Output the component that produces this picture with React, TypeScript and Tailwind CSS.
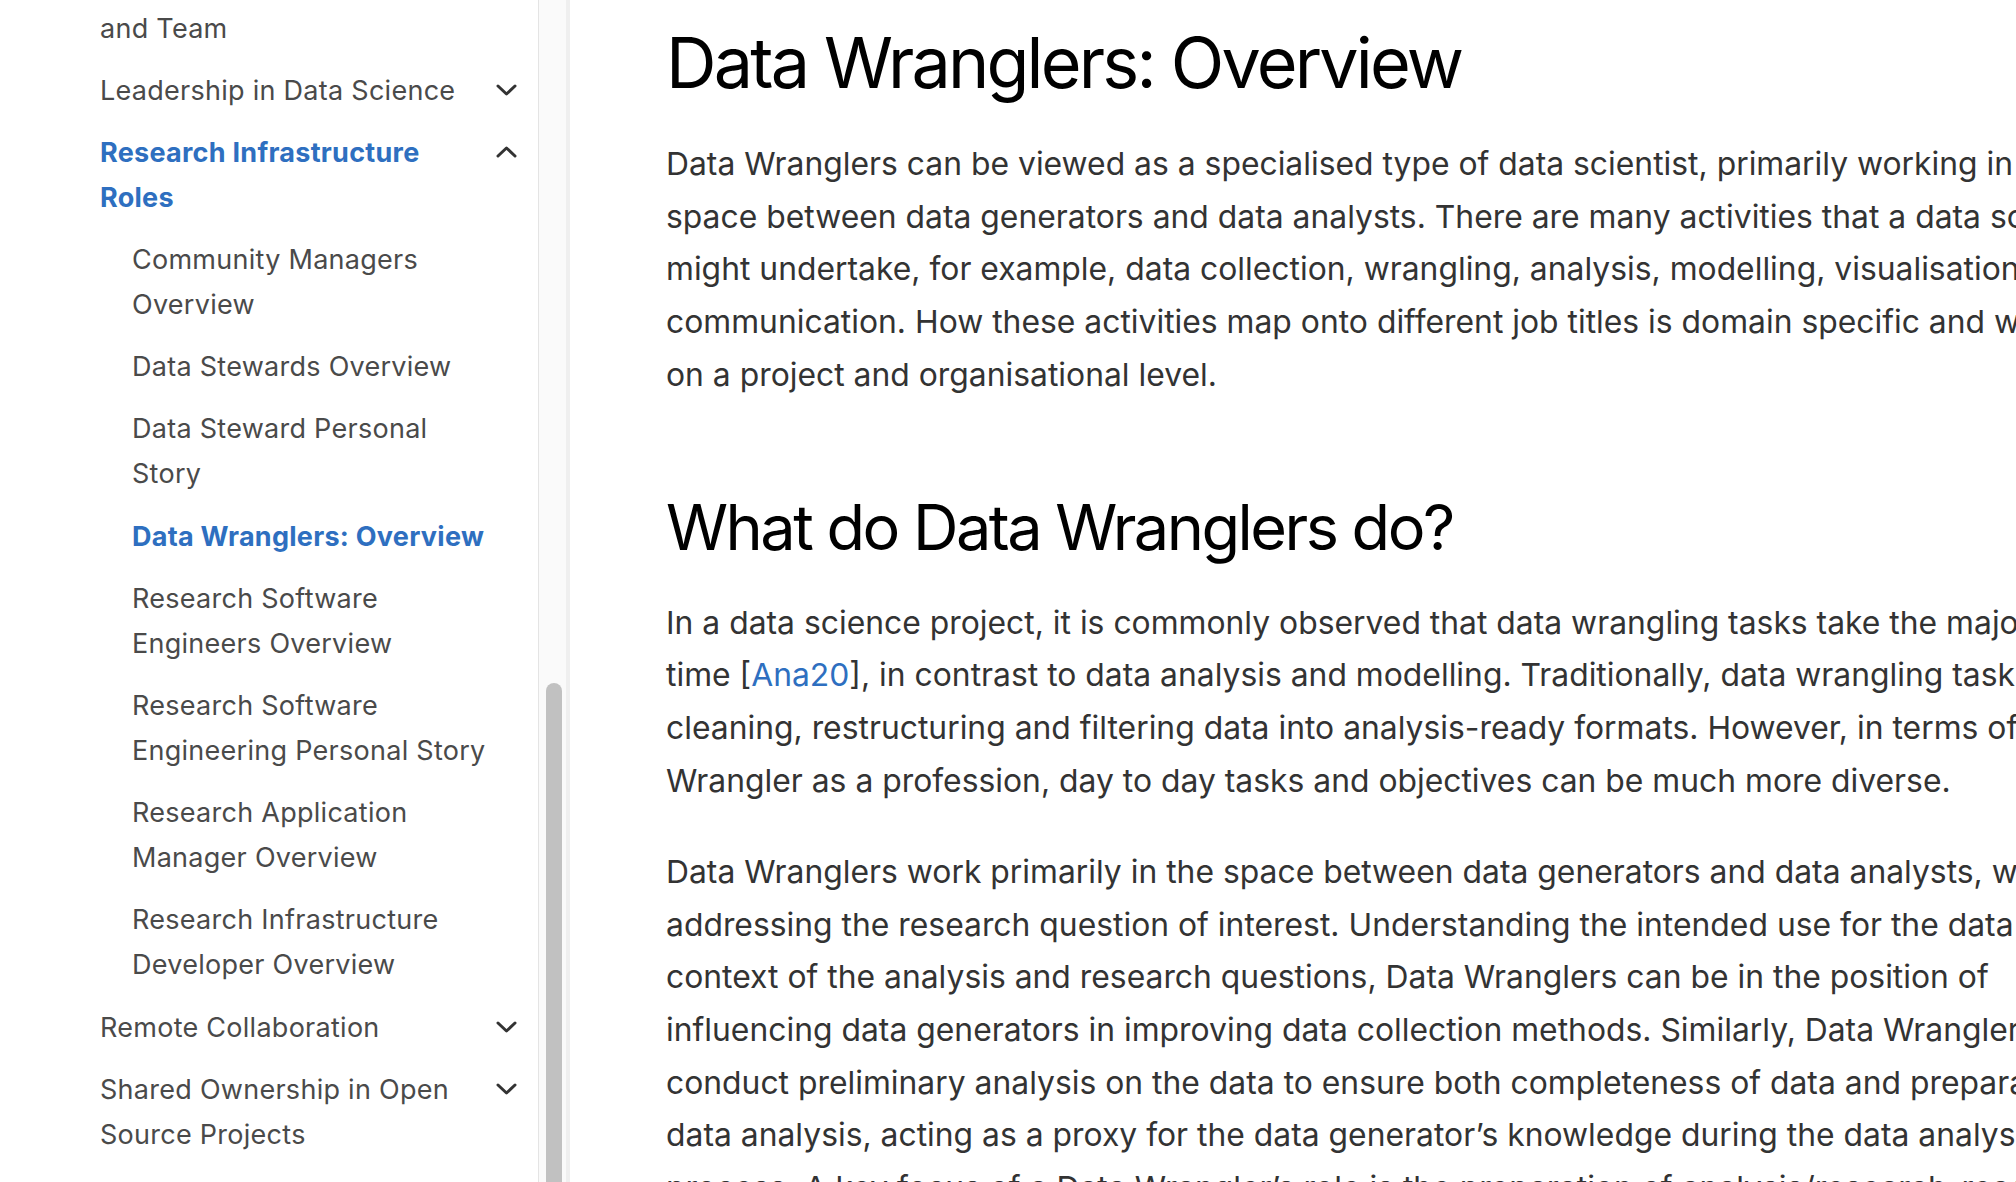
import React from "react";

type NavItem = {
  lines: string[];
  level: 1 | 2;
  active?: boolean;
  chevron?: "down" | "up";
};

const navItems: NavItem[] = [
  { lines: ["Leadership in Data Science"], level: 1, chevron: "down" },
  { lines: ["Research Infrastructure", "Roles"], level: 1, active: true, chevron: "up" },
  { lines: ["Community Managers", "Overview"], level: 2 },
  { lines: ["Data Stewards Overview"], level: 2 },
  { lines: ["Data Steward Personal", "Story"], level: 2 },
  { lines: ["Data Wranglers: Overview"], level: 2, active: true },
  { lines: ["Research Software", "Engineers Overview"], level: 2 },
  { lines: ["Research Software", "Engineering Personal Story"], level: 2 },
  { lines: ["Research Application", "Manager Overview"], level: 2 },
  { lines: ["Research Infrastructure", "Developer Overview"], level: 2 },
  { lines: ["Remote Collaboration"], level: 1, chevron: "down" },
  { lines: ["Shared Ownership in Open", "Source Projects"], level: 1, chevron: "down" },
];

const para1 = [
  "Data Wranglers can be viewed as a specialised type of data scientist, primarily working in the",
  "space between data generators and data analysts. There are many activities that a data scientist",
  "might undertake, for example, data collection, wrangling, analysis, modelling, visualisation and",
  "communication. How these activities map onto different job titles is domain specific and will vary",
  "on a project and organisational level.",
];

const para3 = [
  "Data Wranglers work primarily in the space between data generators and data analysts, while",
  "addressing the research question of interest. Understanding the intended use for the data and the",
  "context of the analysis and research questions, Data Wranglers can be in the position of",
  "influencing data generators in improving data collection methods. Similarly, Data Wranglers can",
  "conduct preliminary analysis on the data to ensure both completeness of data and preparation for",
  "data analysis, acting as a proxy for the data generator’s knowledge during the data analysis",
  "process. A key focus of a Data Wrangler’s role is the preparation of analysis/research-ready data",
];

function Chevron({ dir }: { dir: "down" | "up" }) {
  return (
    <svg width="21" height="12" viewBox="0 0 21 12" fill="none">
      <polyline
        points={dir === "down" ? "2,2 10.5,10 19,2" : "2,10 10.5,2 19,10"}
        stroke="#333333"
        strokeWidth="3"
        strokeLinecap="round"
        strokeLinejoin="round"
      />
    </svg>
  );
}

function SidebarItem({ item }: { item: NavItem }) {
  const color = item.active ? "text-[#2e6fc0] font-bold" : "text-[#4a4a4a]";
  return (
    <li className={`flex items-start py-[8.6px] ${item.level === 2 ? "pl-[32px]" : ""}`}>
      <span className={`whitespace-nowrap ${color}`}>
        {item.lines.map((line, i) => (
          <span key={i} className="block">
            {line}
          </span>
        ))}
      </span>
      {item.chevron && (
        <span className="ml-auto flex h-[45px] items-center">
          <Chevron dir={item.chevron} />
        </span>
      )}
    </li>
  );
}

function Line({ children }: { children: React.ReactNode }) {
  return <span className="block whitespace-nowrap">{children}</span>;
}

export default function App() {
  return (
    <div className="flex h-[1182px] w-full overflow-hidden bg-white font-['Inter','Noto_Sans',sans-serif]">
      <aside className="flex w-[570px] shrink-0">
        <nav className="w-[538px] overflow-hidden pl-[100px] pr-[21px] pt-[5.5px] text-[27px] leading-[45px] tracking-[0.01em]">
          <div className="pb-[8.6px] text-[#4a4a4a]">and Team</div>
          <ul>
            {navItems.map((item, i) => (
              <SidebarItem key={i} item={item} />
            ))}
          </ul>
        </nav>
        <div className="flex w-[32px] flex-col border-l border-r-[4px] border-l-[#e4e4e4] border-r-[#efefef] bg-[#fafafa] pl-[7px] pt-[683px]">
          <div className="w-[16px] flex-1 rounded-t-full bg-[#c1c1c1]" />
        </div>
      </aside>

      <main className="min-w-0 flex-1 overflow-hidden pl-[96px] pt-[20.5px] text-[#333333]">
        <h1 className="mb-[33.5px] whitespace-nowrap text-[70px] leading-[84px] tracking-[-0.04em] text-black">
          Data Wranglers: Overview
        </h1>

        <p className="mb-[87px] text-[31.85px] leading-[52.7px]">
          {para1.map((l, i) => (
            <Line key={i}>{l}</Line>
          ))}
        </p>

        <h2 className="mb-[32px] whitespace-nowrap text-[63px] leading-[76px] tracking-[-0.04em] text-black">
          What do Data Wranglers do?
        </h2>

        <p className="mb-[38.5px] text-[31.85px] leading-[52.7px]">
          <Line>
            In a data science project, it is commonly observed that data wrangling tasks take the majority of
          </Line>
          <Line>
            time [<a className="text-[#2e6fc0]">Ana20</a>], in contrast to data analysis and modelling.
            Traditionally, data wrangling tasks include
          </Line>
          <Line>
            cleaning, restructuring and filtering data into analysis-ready formats. However, in terms of a Data
          </Line>
          <Line>Wrangler as a profession, day to day tasks and objectives can be much more diverse.</Line>
        </p>

        <p className="text-[31.85px] leading-[52.7px]">
          {para3.map((l, i) => (
            <Line key={i}>{l}</Line>
          ))}
        </p>
      </main>
    </div>
  );
}
